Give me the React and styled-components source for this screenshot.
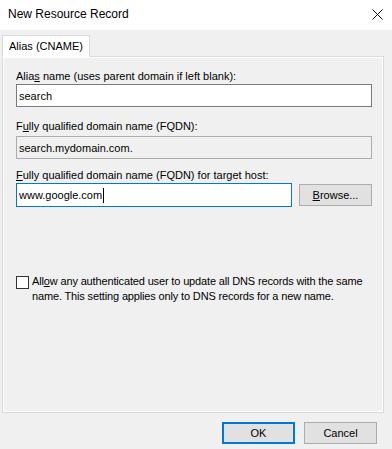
import React from "react";
import styled, { createGlobalStyle } from "styled-components";

const Global = createGlobalStyle`
  html, body {
    margin: 0;
    padding: 0;
    background: #f0f0f0;
    font-family: "Liberation Sans", Arial, sans-serif;
    font-size: 11px;
    color: #000;
  }
`;

const Window = styled.div`
  width: 392px;
  height: 449px;
  display: flex;
  flex-direction: column;
  background: #f0f0f0;
`;

const TitleBar = styled.div`
  height: 30px;
  background: #fff;
  display: flex;
  align-items: center;
  justify-content: space-between;
  padding: 0 9px 2px 8px;
  box-sizing: border-box;
  font-size: 12px;
`;

const Body = styled.div`
  padding: 5px 8px 0 2px;
  display: flex;
  flex-direction: column;
`;

const TabStrip = styled.div`
  display: flex;
  position: relative;
  z-index: 1;
  margin-bottom: -1px;
`;

const Tab = styled.div`
  height: 20px;
  padding: 0 6px 0 6px;
  display: flex;
  align-items: center;
  background: #fff;
  border: 1px solid #d9d9d9;
  border-bottom: 1px solid #fff;
  font-size: 11px;
`;

const Panel = styled.div`
  height: 357px;
  box-sizing: border-box;
  border: 1px solid #d9d9d9;
  box-shadow: inset 1px 1px 0 #fff, inset -1px -1px 0 #fff;
  padding: 13px 11px 0 13px;
  display: flex;
  flex-direction: column;
`;

const Field = styled.div`
  display: flex;
  flex-direction: column;
  gap: ${(p) => p.$gap}px;
  margin-bottom: ${(p) => p.$after}px;
`;

const Label = styled.div`
  line-height: 13px;
  height: 13px;
  white-space: nowrap;
`;

const Row = styled.div`
  display: flex;
  align-items: center;
  gap: 7px;
`;

const Box = styled.div`
  box-sizing: border-box;
  width: ${(p) => p.$w}px;
  height: ${(p) => p.$h}px;
  border: 1px solid ${(p) => (p.$focus ? "#0078d7" : p.$readonly ? "#adadad" : "#7a7a7a")};
  background: ${(p) => (p.$readonly ? "#f0f0f0" : "#fff")};
  display: flex;
  align-items: center;
  padding-left: 2px;
  font-size: 11px;
  white-space: nowrap;
`;

const Caret = styled.span`
  display: inline-block;
  width: 1px;
  height: 15px;
  background: #000;
  margin-left: 1px;
`;

const Button = styled.div`
  box-sizing: border-box;
  width: 73px;
  height: 22px;
  background: #e1e1e1;
  border: ${(p) => (p.$default ? "2px solid #0078d7" : "1px solid #adadad")};
  display: flex;
  align-items: center;
  justify-content: center;
  font-size: 11px;
`;

const CheckRow = styled.div`
  display: flex;
  align-items: flex-start;
  gap: 3px;
  margin-top: 69px;
`;

const CheckBox = styled.div`
  box-sizing: border-box;
  width: 13px;
  height: 13px;
  border: 1px solid #333;
  background: #fff;
  flex-shrink: 0;
`;

const CheckText = styled.div`
  line-height: 15px;
  margin-top: -2px;
  white-space: nowrap;
  letter-spacing: -0.15px;
`;

const Footer = styled.div`
  display: flex;
  justify-content: flex-end;
  gap: 9px;
  padding: 9px 7px 0 0;
`;

const CloseIcon = () => (
  <svg width="11" height="11" viewBox="0 0 11 11">
    <path d="M0.5 0.5 L10.5 10.5 M10.5 0.5 L0.5 10.5" stroke="#111" strokeWidth="1" fill="none" />
  </svg>
);

export default function App() {
  return (
    <>
      <Global />
      <Window>
        <TitleBar>
          <span>New Resource Record</span>
          <CloseIcon />
        </TitleBar>
        <Body>
          <TabStrip>
            <Tab>Alias (CNAME)</Tab>
          </TabStrip>
          <Panel>
            <Field $gap={1} $after={13}>
              <Label>
                Alia<u>s</u> name (uses parent domain if left blank):
              </Label>
              <Box $w={356} $h={23}>search</Box>
            </Field>
            <Field $gap={3} $after={10}>
              <Label>
                F<u>u</u>lly qualified domain name (FQDN):
              </Label>
              <Box $w={356} $h={23} $readonly>search.mydomain.com.</Box>
            </Field>
            <Field $gap={1} $after={0}>
              <Label>
                <u>F</u>ully qualified domain name (FQDN) for target host:
              </Label>
              <Row>
                <Box $w={276} $h={24} $focus>
                  www.google.com<Caret />
                </Box>
                <Button>
                  <span>
                    <u>B</u>rowse...
                  </span>
                </Button>
              </Row>
            </Field>
            <CheckRow>
              <CheckBox />
              <CheckText>
                All<u>o</u>w any authenticated user to update all DNS records with the same
                <br />
                name. This setting applies only to DNS records for a new name.
              </CheckText>
            </CheckRow>
          </Panel>
          <Footer>
            <Button $default>OK</Button>
            <Button>Cancel</Button>
          </Footer>
        </Body>
      </Window>
    </>
  );
}
